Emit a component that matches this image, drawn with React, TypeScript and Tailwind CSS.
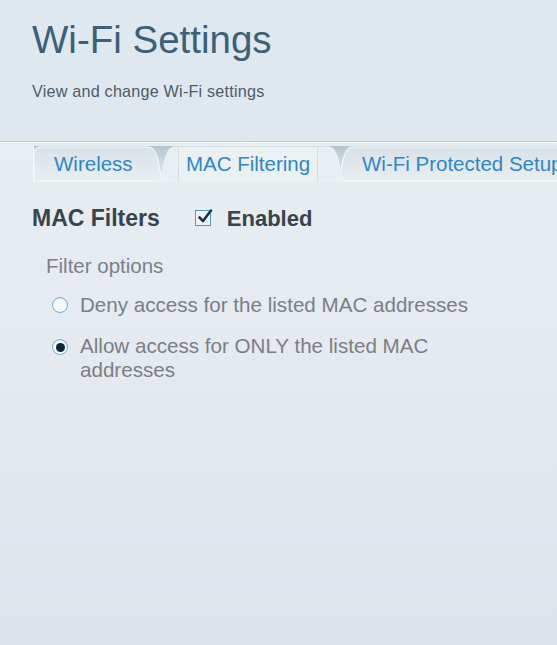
import type { ReactNode } from 'react';

const font = "font-['Liberation_Sans','Helvetica_Neue',Arial,sans-serif]";

function TabShape({ width, first, active }: { width: number; first?: boolean; active?: boolean }) {
  const w = width;
  const left = first
    ? 'M0 35 V7 Q0 1 6 1'
    : 'M0 35 C4 34 5 24 7 14 C9 6 11 1 17 1';
  const d = `${left} H${w - 17} C${w - 11} 1 ${w - 9} 6 ${w - 7} 14 C${w - 5} 24 ${w - 4} 34 ${w} 35 Z`;
  const id = active ? 'tabActive' : 'tabIdle';
  return (
    <svg className="absolute inset-0" width={w} height={36} viewBox={`0 0 ${w} 36`} fill="none">
      <defs>
        <linearGradient id="tabIdle" x1="0" y1="0" x2="0" y2="1">
          <stop offset="0" stopColor="#d9e2e7" />
          <stop offset="1" stopColor="#e9eef1" />
        </linearGradient>
        <linearGradient id="tabActive" x1="0" y1="0" x2="0" y2="1">
          <stop offset="0" stopColor="#e7edf1" />
          <stop offset="1" stopColor="#e9eef1" />
        </linearGradient>
      </defs>
      <path d={d} fill={`url(#${id})`} stroke={active ? '#f3f6f8' : '#fbfcfd'} strokeWidth="1" />
      {active && <rect x="0" y="35" width={w} height="1" fill="#e9eef1" />}
    </svg>
  );
}

function Tab({ width, first, active, children, className }: { width: number; first?: boolean; active?: boolean; children: ReactNode; className?: string }) {
  return (
    <div className={`relative h-[36px] shrink-0 ${active ? 'z-20' : 'z-10'} ${className ?? ''}`} style={{ width }}>
      <TabShape width={width} first={first} active={active} />
      <div className="relative h-full flex items-center">{children}</div>
    </div>
  );
}

function Radio({ checked }: { checked?: boolean }) {
  return (
    <span className="w-[16px] h-[16px] shrink-0 rounded-full border-[1.5px] border-[#6fb0d8] bg-[#f7fafc] flex items-center justify-center shadow-[inset_0_1px_1px_rgba(0,0,0,0.08)]">
      {checked && <span className="w-[9px] h-[9px] rounded-full bg-[#0f2638]" />}
    </span>
  );
}

export default function App() {
  return (
    <div className={`w-[557px] h-[645px] overflow-hidden bg-gradient-to-b from-[#e8eef1] via-[#e5ebf0] to-[#dce3ea] ${font}`}>
      {/* Header */}
      <header className="h-[142px] bg-[#dfe8ef] border-b border-[#c2cbd1] pl-[32px] pt-[18px]">
        <h1 className="text-[38.5px] leading-[44px] text-[#3b6078]">Wi-Fi Settings</h1>
        <p className="mt-[19px] text-[16.2px] leading-[20px] text-[#4d5c67] tracking-[0.2px]">View and change Wi-Fi settings</p>
      </header>

      {/* Tabs */}
      <div className="border-t border-white pt-[3px] pl-[33px]">
        <div className="flex h-[36px] border-l border-[#f6f8f9] bg-gradient-to-b from-[#b5c5cd] via-[#d3dde2] to-[#e6ecef]">
          <Tab width={131} first>
            <span className="pl-[20px] text-[20.5px] text-[#2e87c8]">Wireless</span>
          </Tab>
          <Tab width={187} active className="-ml-[7px]">
            <div className="ml-[20px] h-full w-[140px] border-x border-t border-[#d4dee4] bg-[#ebf0f3] flex items-center justify-center">
              <span className="text-[20.5px] text-[#2e87c8] whitespace-nowrap">MAC Filtering</span>
            </div>
          </Tab>
          <Tab width={260} className="-ml-[9px]">
            <span className="pl-[26px] text-[20.5px] text-[#2e87c8] whitespace-nowrap">Wi-Fi Protected Setup</span>
          </Tab>
        </div>
      </div>

      {/* Content */}
      <main className="pl-[32px]">
        <div className="mt-[22px] flex items-center h-[28px]">
          <h2 className="text-[23px] font-bold text-[#35444e]">MAC Filters</h2>
          <label className="ml-[35px] flex items-center gap-[16px]">
            <span className="relative w-[16px] h-[16px] border-[1.5px] border-[#4d9bcb] bg-[#edf3f7]">
              <svg className="absolute -top-[3px] left-[1px]" width="16" height="16" viewBox="0 0 16 16">
                <path d="M2.5 9.5 L6 13 L14 2.5" fill="none" stroke="#1b3446" strokeWidth="2.6" strokeLinecap="round" strokeLinejoin="round" />
              </svg>
            </span>
            <span className="text-[22px] font-bold text-[#35444e]">Enabled</span>
          </label>
        </div>

        <p className="mt-[22px] pl-[14px] text-[20.5px] leading-[24px] text-[#7c8186]">Filter options</p>

        <div className="mt-[15px] pl-[20px] flex flex-col gap-[17px] text-[20.6px] leading-[24px] text-[#7b7f84]">
          <label className="flex items-center gap-[12px]">
            <Radio />
            <span>Deny access for the listed MAC addresses</span>
          </label>
          <label className="flex items-start gap-[12px]">
            <span className="mt-[5px]">
              <Radio checked />
            </span>
            <span className="max-w-[410px]">Allow access for ONLY the listed MAC addresses</span>
          </label>
        </div>
      </main>
    </div>
  );
}
